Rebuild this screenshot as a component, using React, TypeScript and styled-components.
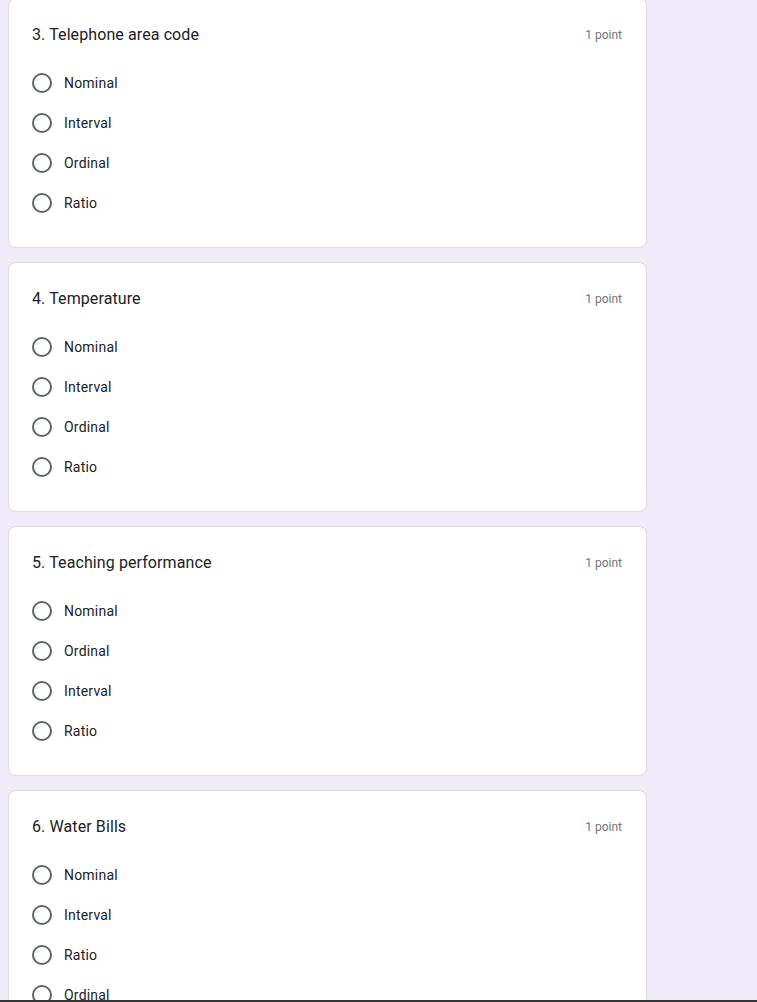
import styled, { createGlobalStyle } from "styled-components";

// A question as shown on the form
interface Question {
  number: number;
  title: string;
  points: number;
  options: string[];
}

const questions: Question[] = [
  { number: 3, title: "Telephone area code", points: 1, options: ["Nominal", "Interval", "Ordinal", "Ratio"] },
  { number: 4, title: "Temperature", points: 1, options: ["Nominal", "Interval", "Ordinal", "Ratio"] },
  { number: 5, title: "Teaching performance", points: 1, options: ["Nominal", "Ordinal", "Interval", "Ratio"] },
  { number: 6, title: "Water Bills", points: 1, options: ["Nominal", "Interval", "Ratio", "Ordinal"] },
];

const GlobalStyle = createGlobalStyle`
  html, body {
    margin: 0;
    padding: 0;
    height: 1002px;
    overflow: hidden;
    background: #f0ebf8;
    font-family: Roboto, "Liberation Sans", Arial, sans-serif;
  }
`;

const Page = styled.div`
  display: flex;
  flex-direction: column;
  gap: 14px;
  padding: 0 8px;
  margin-top: -2px;
`;

const Card = styled.div`
  width: 639px;
  box-sizing: border-box;
  background: #ffffff;
  border: 1px solid #dadce0;
  border-radius: 8px;
  padding: 23px 24px 24px 23px;
`;

const Header = styled.div`
  display: flex;
  justify-content: space-between;
  align-items: center;
  height: 24px;
  margin-bottom: 17px;
`;

const Title = styled.div`
  font-size: 16px;
  color: #202124;
  letter-spacing: 0.1px;
`;

const Points = styled.div`
  font-size: 12px;
  color: #70757a;
  padding-top: 2px;
`;

const Options = styled.div`
  display: flex;
  flex-direction: column;
`;

const Option = styled.label`
  display: flex;
  align-items: center;
  height: 40px;
  gap: 12px;
  cursor: pointer;
`;

const Radio = styled.span`
  width: 20px;
  height: 20px;
  box-sizing: border-box;
  border: 2px solid #5f6368;
  border-radius: 50%;
  flex-shrink: 0;
`;

const OptionText = styled.span`
  font-size: 14px;
  color: #202124;
  letter-spacing: 0.2px;
`;

const BottomBar = styled.div`
  position: fixed;
  left: 0;
  right: 0;
  bottom: 0;
  height: 2px;
  background: #333333;
`;

export default function App() {
  return (
    <>
      <GlobalStyle />
      <Page>
        {questions.map((q) => (
          <Card key={q.number}>
            <Header>
              <Title>
                {q.number}. {q.title}
              </Title>
              <Points>{q.points} point</Points>
            </Header>
            <Options>
              {q.options.map((opt) => (
                <Option key={opt}>
                  <Radio />
                  <OptionText>{opt}</OptionText>
                </Option>
              ))}
            </Options>
          </Card>
        ))}
      </Page>
      <BottomBar />
    </>
  );
}
